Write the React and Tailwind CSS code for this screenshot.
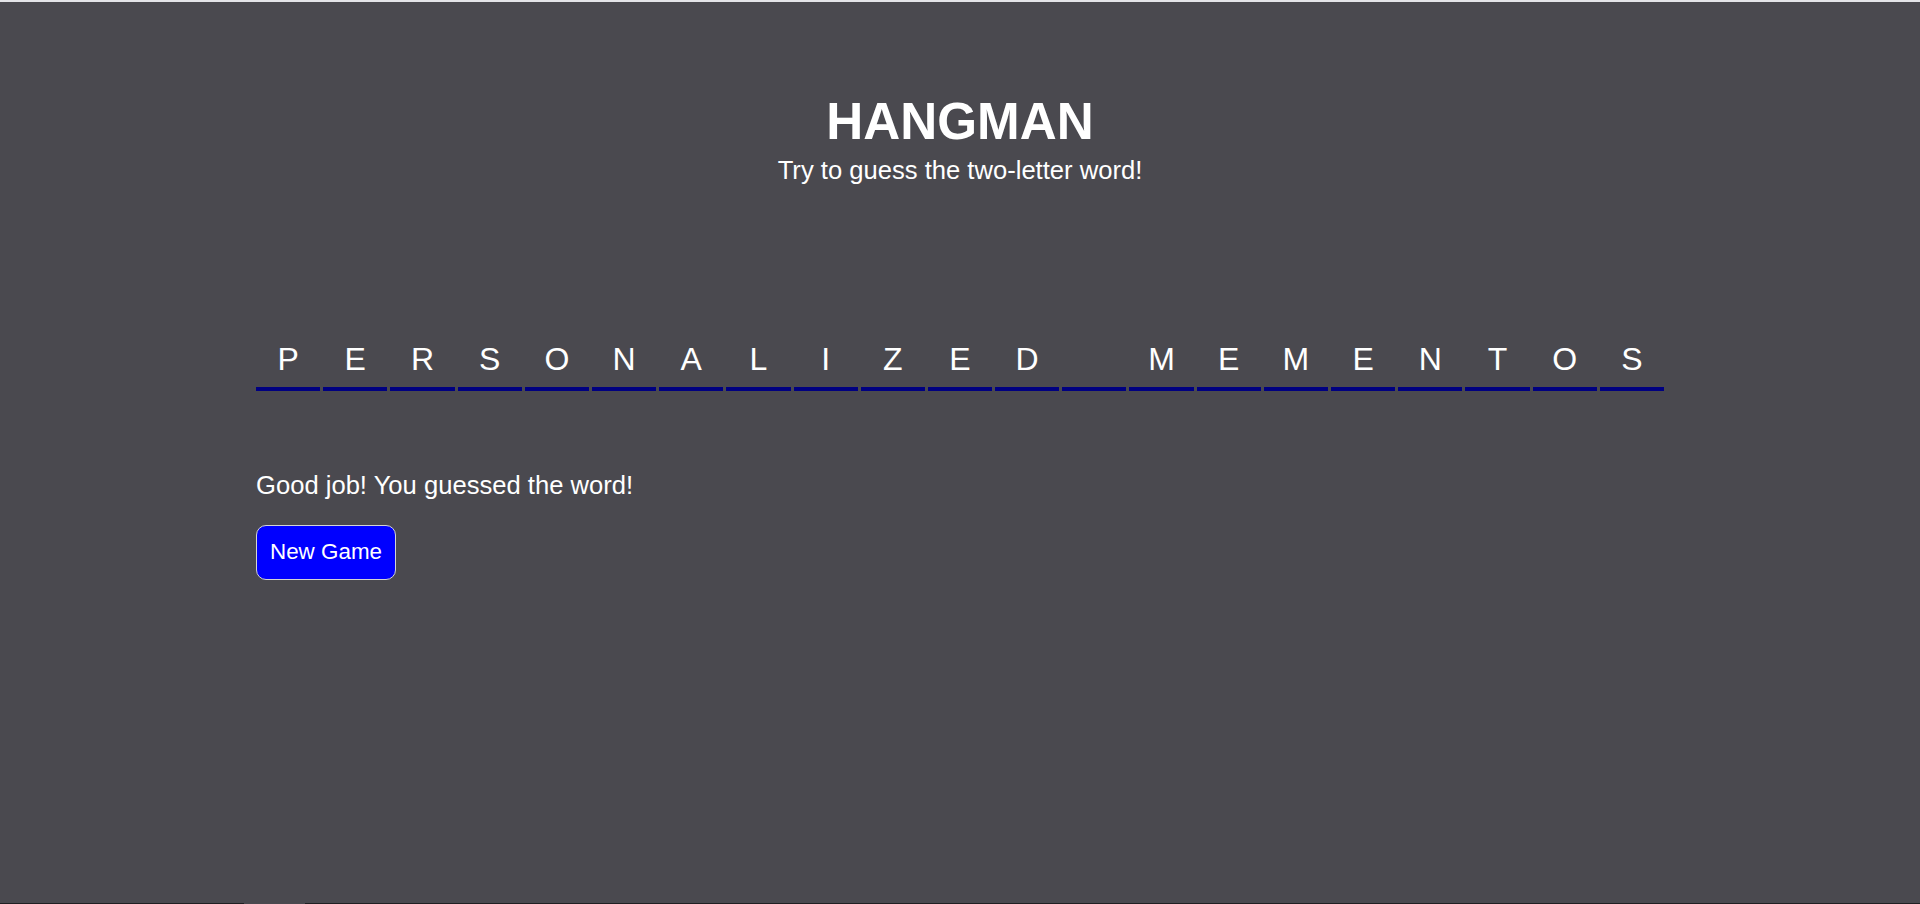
export default function App() {
  const word = "PERSONALIZED MEMENTOS".split("");
  return (
    <div className="h-[904px] flex flex-col bg-[#4a494f] text-white overflow-hidden" style={{ fontFamily: '"Liberation Sans", Arial, sans-serif' }}>
      <div className="h-[2px] bg-[#e4e4e8] shrink-0" />
      <main className="flex-1 pt-[94px]">
        <header className="flex flex-col items-center">
          <h1 className="text-[51.2px] leading-none font-bold">HANGMAN</h1>
          <p className="mt-[11px] text-[25.6px] leading-none">Try to guess the two-letter word!</p>
        </header>
        <div className="w-[1408px] mx-auto mt-[159px]">
          <div className="flex gap-[3px]">
            {word.map((ch, i) => (
              <div key={i} className="flex-1 h-[48px] pb-[12px] border-b-4 border-[#000080] text-[32px] leading-none text-center">
                {ch === " " ? "\u00a0" : ch}
              </div>
            ))}
          </div>
          <p className="mt-[82px] text-[25.6px] leading-none">Good job! You guessed the word!</p>
          <button className="mt-[27px] bg-[#0000ff] border border-[#d4d4d4] rounded-[10px] px-[13px] py-[15px] text-[22.4px] leading-none text-white">
            New Game
          </button>
        </div>
      </main>
      <div className="h-[1px] flex shrink-0 bg-[#1f1f22]">
        <div className="w-[244px]" />
        <div className="w-[61px] bg-[#4a494f]" />
      </div>
    </div>
  );
}
